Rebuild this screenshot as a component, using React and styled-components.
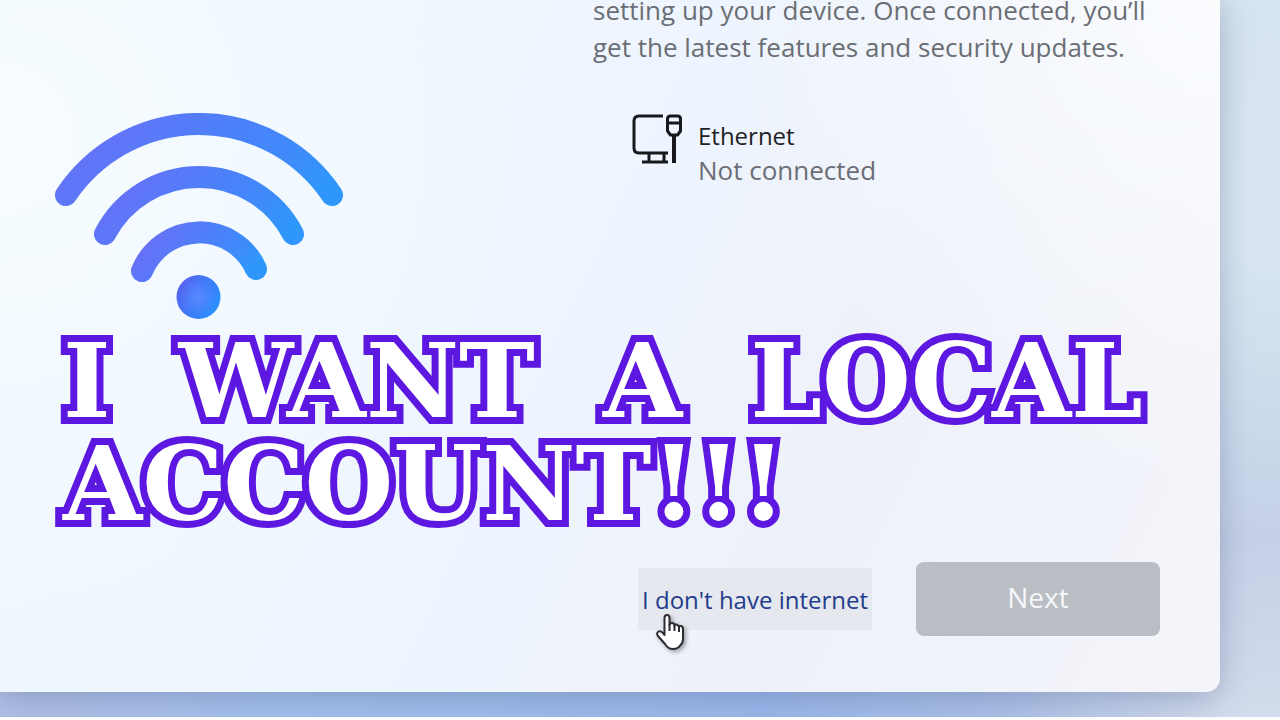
import React from 'react';
import styled, { createGlobalStyle } from 'styled-components';


function WifiArt() {
    return (
        <WifiSvg viewBox="0 0 288 208" aria-hidden="true">
            <defs>
                <linearGradient id="arc" x1="-0.05" y1="0.3" x2="1.05" y2="0.6">
                    <stop offset="0" stopColor="#6a6cf5" />
                    <stop offset="0.2" stopColor="#5f76f8" />
                    <stop offset="0.5" stopColor="#4c80f9" />
                    <stop offset="0.8" stopColor="#3e8bfa" />
                    <stop offset="1" stopColor="#2f97fc" />
                </linearGradient>
                <radialGradient id="glow">
                    <stop offset="0" stopColor="#5b8aff" stopOpacity="0.9" />
                    <stop offset="1" stopColor="#5b8aff" stopOpacity="0" />
                </radialGradient>
                <linearGradient id="dot" x1="0" y1="0.2" x2="1" y2="0.8">
                    <stop offset="0" stopColor="#5a62f0" />
                    <stop offset="1" stopColor="#2594ff" />
                </linearGradient>
            </defs>
            <g fill="none" stroke="url(#arc)" strokeWidth="22" strokeLinecap="round">
                <path d="M11 82A160 160 0 0 1 277 82" />
                <path d="M50 121A106 106 0 0 1 238 121" />
                <path d="M87 158A62 62 0 0 1 201 156" />
            </g>
            <circle cx="143.500" cy="184" r="22" fill="url(#dot)" />
            <circle cx="143.500" cy="184" r="18" fill="url(#glow)" />
        </WifiSvg>
    );
}

function EthernetIcon() {
    return (
        <EthernetSvg viewBox="0 0 50 50" aria-hidden="true">
            <g fill="none" stroke="#16181c" strokeWidth="3">
                <path d="M31 2H7Q2 2 2 7V34Q2 39 7 39H36M17 39V48M32 39V48M10 48H36" />
                <path d="M42 21V49" strokeWidth="4" />
                <path d="M35.500 9V5Q35.500 2 38.500 2H45.500Q48.500 2 48.500 5V17L45.500 21H38.500L35.500 17V9H48.500" strokeLinejoin="round" />
            </g>
        </EthernetSvg>
    );
}

function HandCursor() {
    return (
        <CursorSvg viewBox="0 0 28 36" aria-hidden="true">
            <path
                d="M8.500 21V4Q8.500 1 11 1T13.500 4V11Q13.500 9 16 9T18.500 12Q18.500 10 20.500 10.500T23 13Q23 11.500 25 12T27 15V25Q27 29 24.500 31Q22 35 17 35Q12 35 9 30L2 22Q0 19 2.500 17.500T8.500 21Z"
                fill="#fff"
                stroke="#2b2d33"
                strokeWidth="2"
                strokeLinejoin="round"
            />
            <path d="M13.500 10V17M18.500 12V17M23 13V18" fill="none" stroke="#2b2d33" strokeWidth="2" />
        </CursorSvg>
    );
}

function App() {

    const words = ['I', 'WANT', 'A', 'LOCAL', 'ACCOUNT!!!'];

    return (
        <Page>
            <GlobalStyle />
            <Backdrop>
                <Panel>
                    <Columns>
                        <Art>
                            <WifiArt />
                        </Art>
                        <Info>
                            <Description>
                                setting up your device. Once connected, you’ll<br />
                                get the latest features and security updates.
                            </Description>
                            <Network>
                                <EthernetIcon />
                                <NetworkText>
                                    <NetworkName>Ethernet</NetworkName>
                                    <NetworkState>Not connected</NetworkState>
                                </NetworkText>
                            </Network>
                        </Info>
                    </Columns>
                    <Headline>
                        {words.map((word) => (
                            <span key={word}>{word} </span>
                        ))}
                    </Headline>
                    <Actions>
                        <SkipButton type="button">
                            I don't have internet
                            <HandCursor />
                        </SkipButton>
                        <NextButton type="button" disabled>Next</NextButton>
                    </Actions>
                </Panel>
            </Backdrop>
        </Page>
    );
}


export default App;

const GlobalStyle = createGlobalStyle`
    * {
        box-sizing: border-box;
    }

    body {
        margin: 0;
        background: #fff;
        font-family: "Open Sans", "Noto Sans", sans-serif;
    }
`

const Page = styled.div`
    min-height: 100vh;
    padding-bottom: 4px;
    overflow: hidden;
`

const Backdrop = styled.div`
    padding: 0 60px 25px 0;
    overflow: hidden;
    background:
        linear-gradient(to right, #b0bee4 0%, #a2bfec 22%, #9ab6ea 60%, #aabfe6 78%, #c8d3e8 92%, rgba(211, 220, 236, 0) 96%) bottom / 100% 40px no-repeat,
        linear-gradient(to bottom, #d6e4ef 0%, #d8e5f1 35%, #cddcec 55%, #c5d0e7 75%, #d3dcec 100%);
`

const Panel = styled.main`
    overflow: hidden;
    padding: 0 60px 56px 55px;
    border-radius: 0 0 14px 0;
    background:
        radial-gradient(circle at 100% 0%, #fafcfe 0%, rgba(250, 252, 254, 0) 35%),
        radial-gradient(circle at 0% 20%, #f6fcff 0%, rgba(246, 252, 255, 0) 40%),
        linear-gradient(115deg, #f0f8ff 0%, #eef5fe 45%, #eef1fa 68%, #f4f5fa 100%);
    box-shadow: 0 4px 30px rgba(80, 100, 140, 0.4);
`

const Columns = styled.div`
    display: grid;
    grid-template-columns: 538px 1fr;
`

const Art = styled.div`
    padding-top: 113px;
`

const WifiSvg = styled.svg`
    display: block;
    width: 288px;
    height: 208px;
`

const Info = styled.div`
    margin-top: -8px;
`

const Description = styled.p`
    margin: 0;
    color: #6b6e74;
    font-size: 26px;
    line-height: 37px;
    white-space: nowrap;
`

const Network = styled.div`
    display: flex;
    gap: 16px;
    padding: 48px 0 0 39px;
`

const EthernetSvg = styled.svg`
    width: 50px;
    height: 50px;
`

const NetworkText = styled.div`
    padding-top: 4px;
    line-height: 35px;
`

const NetworkName = styled.div`
    color: #1f2227;
    font-size: 24px;
`

const NetworkState = styled.div`
    color: #6b6e74;
    font-size: 26px;
`

const Headline = styled.h1`
    display: flex;
    flex-wrap: wrap;
    column-gap: 68px;
    margin: 9px 0 0 8px;
    color: #fff;
    font-family: "DejaVu Serif", serif;
    font-size: 102px;
    font-weight: 700;
    line-height: 103px;
    -webkit-text-stroke: 14px #5c17e0;
    paint-order: stroke fill;
`

const Actions = styled.div`
    display: flex;
    justify-content: flex-end;
    align-items: center;
    gap: 44px;
    margin-top: 26px;
`

const SkipButton = styled.button`
    position: relative;
    height: 62px;
    padding: 0 4px;
    border: 0;
    background: #e5e8ef;
    color: #233c8c;
    font-family: inherit;
    font-size: 24px;
`

const CursorSvg = styled.svg`
    position: absolute;
    top: 46px;
    left: 18px;
    width: 28px;
    height: 36px;
    filter: drop-shadow(2px 2px 2px rgba(0, 0, 0, 0.35));
`

const NextButton = styled.button`
    width: 244px;
    height: 74px;
    padding: 0 0 4px;
    border: 0;
    border-radius: 8px;
    background: #babdc4;
    color: #f6f7fa;
    font-family: inherit;
    font-size: 28px;
`
